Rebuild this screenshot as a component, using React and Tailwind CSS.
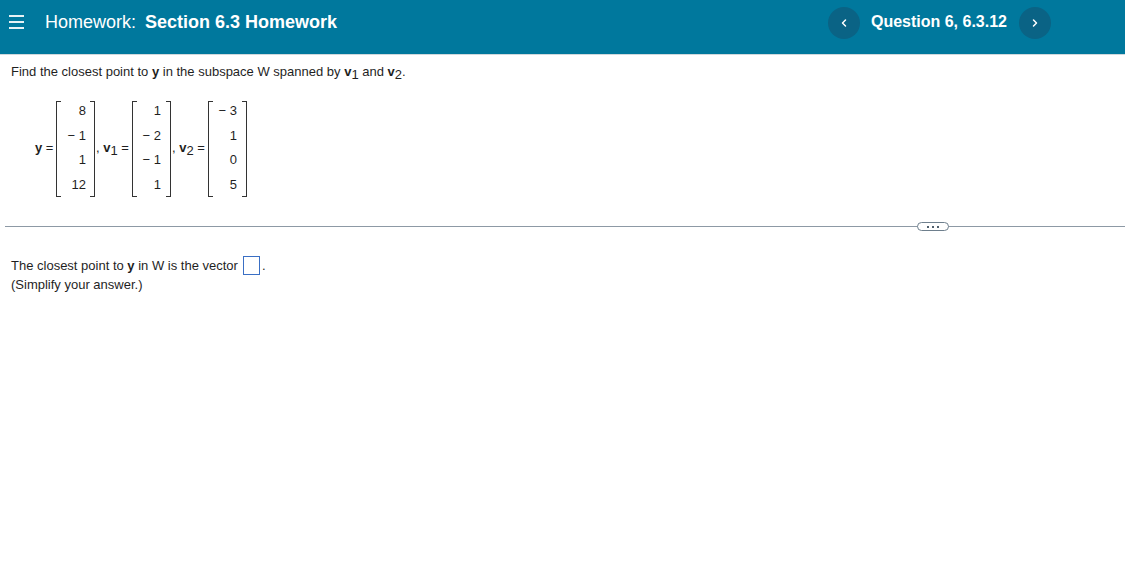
import React from "react";
import { ChevronLeft, ChevronRight } from "lucide-react";

const Matrix = ({ values, first }) => (
  <div className={`relative flex flex-col w-[39px] h-[96px] pt-[1px] ${first ? "pr-[9px]" : "pr-[10px]"}`}>
    <div className="absolute left-0 top-0 bottom-0 w-[5px] border-l border-t border-b border-[#333]" />
    <div className="absolute right-0 top-0 bottom-0 w-[5px] border-r border-t border-b border-[#333]" />
    {values.map((v, i) => (
      <div key={i} className="h-[24.6px] shrink-0 leading-[18px] text-right whitespace-pre">
        {v}
      </div>
    ))}
  </div>
);

const Sub = ({ children }) => (
  <sub className="text-[13px] font-normal relative top-[3px] align-baseline leading-none">{children}</sub>
);

export default function App() {
  return (
    <div className="h-[575px] bg-white text-[13px] text-[#1f1f1f] [font-family:'Liberation_Sans',Arial,sans-serif]">
      <header className="flex h-[55px] items-start bg-[#00789d] text-white border-b border-[#cfd8dc]">
        <div className="mt-[15px] ml-[9px] flex flex-col gap-[4px] w-[15px]">
          <span className="h-[2px] bg-[#e6f2f5]" />
          <span className="h-[2px] bg-[#e6f2f5]" />
          <span className="h-[2px] bg-[#e6f2f5]" />
        </div>
        <div className="ml-[21px] mt-[12px] text-[18px] leading-[21px]">
          Homework:<span className="ml-[9px] font-bold">Section 6.3 Homework</span>
        </div>
        <div className="ml-auto mr-[74px] mt-[7px] flex items-center">
          <button type="button" className="flex h-8 w-8 items-center justify-center rounded-full bg-[#0a6385]">
            <ChevronLeft className="h-[12px] w-[12px]" strokeWidth={3} />
          </button>
          <span className="ml-[11px] mr-[12px] text-[16px] font-bold leading-[28px] relative top-[-1px]">Question 6, 6.3.12</span>
          <button type="button" className="flex h-8 w-8 items-center justify-center rounded-full bg-[#0a6385]">
            <ChevronRight className="h-[12px] w-[12px]" strokeWidth={3} />
          </button>
        </div>
      </header>

      <p className="ml-[11px] mt-[9px] h-[18px] leading-[15px] whitespace-nowrap">
        Find the closest point to <b>y</b> in the subspace W spanned by <b>v</b>
        <Sub>1</Sub> and <b>v</b>
        <Sub>2</Sub>.
      </p>

      <div className="mt-[19px] ml-[35px] flex items-center">
        <span className="w-[21px] whitespace-nowrap relative top-[-1px]">
          <b>y</b> =
        </span>
        <Matrix first values={["8", "\u2212 1", "1", "12"]} />
        <span className="w-[37px] pl-[1px] whitespace-nowrap relative top-[-1px]">
          , <b>v</b>
          <Sub>1</Sub> =
        </span>
        <Matrix values={["1", "\u2212 2", "\u2212 1", "1"]} />
        <span className="w-[37px] pl-[1px] whitespace-nowrap relative top-[-1px]">
          , <b>v</b>
          <Sub>2</Sub> =
        </span>
        <Matrix values={["\u2212 3", "1", "0", "5"]} />
      </div>

      <div className="relative mt-[29px] ml-[5px] h-px bg-[#8d99a5]">
        <button
          type="button"
          className="absolute left-[912px] top-[-4px] flex h-[9px] w-[32px] items-center justify-center gap-[3px] rounded-full border border-[#6e7f8d] bg-white"
        >
          <span className="h-[2px] w-[2px] bg-[#4f5f6d]" />
          <span className="h-[2px] w-[2px] bg-[#4f5f6d]" />
          <span className="h-[2px] w-[2px] bg-[#4f5f6d]" />
        </button>
      </div>

      <div className="ml-[11px] mt-[27px] flex items-end h-[19px] whitespace-nowrap">
        <span className="leading-[15px]">
          The closest point to <b>y</b> in W is the vector
        </span>
        <span className="ml-[5px] h-[19px] w-[17px] border border-[#3a6fc4] relative top-[2px]" />
        <span className="ml-[2px] leading-[15px]">.</span>
      </div>
      <p className="ml-[11px] mt-[4px] leading-[16px]">(Simplify your answer.)</p>
    </div>
  );
}
